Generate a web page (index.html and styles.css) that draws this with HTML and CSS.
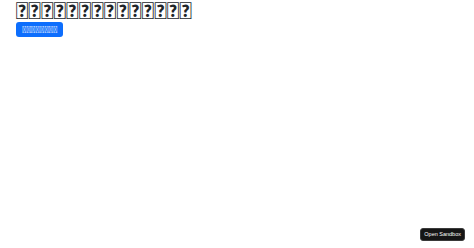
FILE: index.html
```html
<!DOCTYPE html>
<html>
<head>
<meta charset="utf-8">
<link rel="stylesheet" href="styles.css">
</head>
<body>
<div class="app">
  <h1 class="title">&#xE000;&#xE001;&#xE002;&#xE003;&#xE004;&#xE005;&#xE006;&#xE007;&#xE008;&#xE009;&#xE00A;&#xE00B;&#xE00C;&#xE00D;</h1>
  <button class="btn">&#xE010;&#xE011;&#xE012;&#xE013;&#xE014;&#xE015;&#xE016;&#xE017;</button>
</div>
<a class="sandbox-link">Open Sandbox</a>
</body>
</html>
```
FILE: styles.css
```css
html, body {
  margin: 0;
  padding: 0;
  background: #ffffff;
}
.app {
  padding: 0 16px;
  display: flex;
  flex-direction: column;
  align-items: flex-start;
  gap: 2px;
}
.title {
  margin: 0;
  font-family: Lato, sans-serif;
  font-size: 23px;
  font-weight: bold;
  line-height: 20px;
  color: #212529;
}
.btn {
  border: 0;
  border-radius: 3px;
  background: #0d6efd;
  color: #fff;
  font-family: Roboto, sans-serif;
  font-size: 10px;
  line-height: 11px;
  padding: 2px 6px;
}
.sandbox-link {
  position: fixed;
  right: 9px;
  bottom: 7px;
  background: #151515;
  border: 1px solid #3a3a3a;
  border-radius: 3px;
  color: #fff;
  font-family: "Liberation Sans", sans-serif;
  font-size: 5.5px;
  line-height: 7px;
  padding: 2px 3px;
}
```
